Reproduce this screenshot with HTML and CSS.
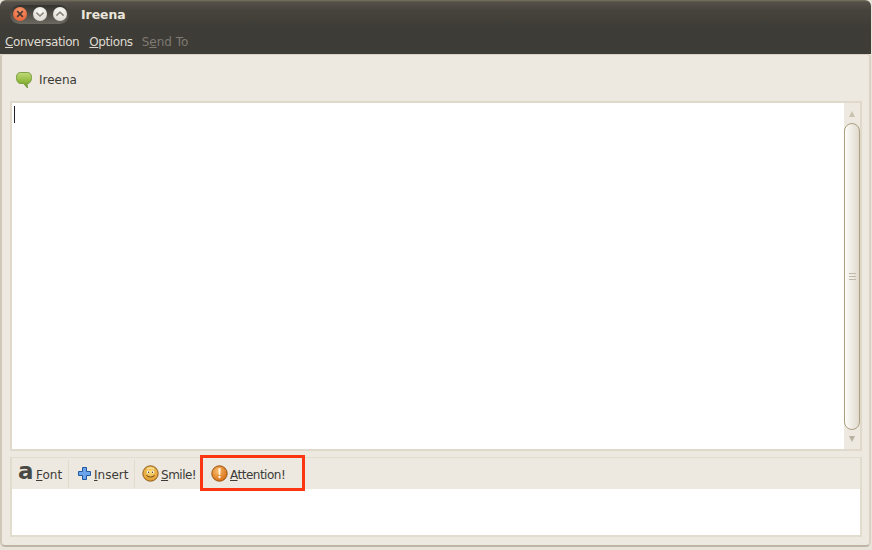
FILE: index.html
```html
<!DOCTYPE html>
<html lang="en">
<head>
<meta charset="utf-8">
<title>Ireena</title>
<link rel="stylesheet" href="styles.css">
</head>
<body>
<div class="window">
  <header class="titlebar">
    <div class="controls">
      <span class="wbtn close">
        <svg width="12" height="12" viewBox="0 0 12 12"><path d="M3.2 3.2l5.6 5.6M8.8 3.2l-5.6 5.6" stroke="#4f3a30" stroke-width="1.8" fill="none"/></svg>
      </span>
      <span class="wbtn">
        <svg width="12" height="12" viewBox="0 0 12 12"><path d="M2.4 4.6L6 8l3.6-3.4" stroke="#8a867c" stroke-width="1.6" fill="none"/></svg>
      </span>
      <span class="wbtn">
        <svg width="12" height="12" viewBox="0 0 12 12"><path d="M2.4 7.6L6 4.2l3.6 3.4" stroke="#8a867c" stroke-width="1.6" fill="none"/></svg>
      </span>
    </div>
    <span class="title">Ireena</span>
  </header>
  <nav class="menubar">
    <span class="menu"><u>C</u>onversation</span>
    <span class="menu"><u>O</u>ptions</span>
    <span class="menu off">S<u>e</u>nd To</span>
  </nav>
  <main class="content">
    <div class="buddy">
      <svg class="buddy-icon" width="18" height="18" viewBox="0 0 18 18">
        <defs><linearGradient id="g" x1="0" y1="0" x2="0" y2="1"><stop offset="0" stop-color="#c2da7c"/><stop offset=".55" stop-color="#93ba3e"/><stop offset="1" stop-color="#6c9622"/></linearGradient></defs>
        <path d="M5.5 1.5h7C15 1.500 16.500 3 16.500 6.500S15 12.500 12.500 12.500h-.5l.5 4.500-4-4.500h-3C3 12.500 1.500 10 1.500 6.500S3 1.500 5.500 1.500z" fill="url(#g)" stroke="#67902a" stroke-width=".8"/>
      </svg>
      <span>Ireena</span>
    </div>
    <div class="history">
      <div class="log"><span class="caret"></span></div>
      <div class="scrollbar">
        <span class="arrow up"></span>
        <div class="thumb"><span class="grip"></span></div>
        <span class="arrow down"></span>
      </div>
    </div>
    <div class="compose">
      <div class="toolbar">
        <div class="tool tool-font"><span class="font-glyph" aria-hidden="true">a</span><span class="label"><u>F</u>ont</span></div>
        <div class="tool tool-insert">
          <svg width="13" height="13" viewBox="0 0 13 13"><path d="M4.500.5h4v4h4v4h-4v4h-4v-4h-4v-4h4z" fill="#6ba4ea" stroke="#20589f" stroke-width="1"/></svg>
          <span class="label"><u>I</u>nsert</span>
        </div>
        <div class="tool tool-smile">
          <svg width="17" height="17" viewBox="0 0 17 17">
            <defs><radialGradient id="s" cx=".5" cy=".4" r=".6"><stop offset="0" stop-color="#fbdc70"/><stop offset="1" stop-color="#e0952c"/></radialGradient></defs>
            <circle cx="8.500" cy="8.500" r="7.700" fill="url(#s)" stroke="#8f6020"/>
            <path d="M5 3.800c2-1.200 5-1.200 7 0" stroke="#fff2c0" fill="none"/>
            <ellipse cx="6.200" cy="7" rx="1.300" ry="1.600" fill="#fff"/><ellipse cx="10.800" cy="7" rx="1.300" ry="1.600" fill="#fff"/>
            <circle cx="6.500" cy="7.300" r=".7" fill="#4a3010"/><circle cx="10.500" cy="7.300" r=".7" fill="#4a3010"/>
            <path d="M4.500 10.200c1 2.400 7 2.400 8 0" stroke="#6a4414" fill="none"/>
          </svg>
          <span class="label tight"><u>S</u>mile!</span>
        </div>
        <div class="tool tool-attention">
          <svg width="17" height="17" viewBox="0 0 17 17">
            <defs><radialGradient id="a" cx=".4" cy=".35" r=".7"><stop offset="0" stop-color="#f9bd6c"/><stop offset="1" stop-color="#d46a10"/></radialGradient></defs>
            <circle cx="8.500" cy="8.500" r="7.700" fill="url(#a)" stroke="#9a5410"/>
            <path d="M7.300 3.200h2.400l-.5 6.800H7.800z" fill="#fff4e6"/><rect x="7.500" y="11" width="2" height="2.200" fill="#fff4e6"/>
          </svg>
          <span class="label tight"><u>A</u>ttention!</span>
        </div>
      </div>
      <div class="input"></div>
    </div>
  </main>
  <div class="highlight"></div>
</div>
</body>
</html>
```
FILE: styles.css
```css
* { box-sizing: border-box; }
html, body { margin: 0; padding: 0; }
body { background: #fff; font-family: "DejaVu Sans", sans-serif; font-size: 12px; color: #3c3b37; }
.window { position: relative; width: 872px; height: 550px; display: flex; flex-direction: column; overflow: hidden; background: #e9e4da; }
.titlebar {
  height: 28px; flex: none; display: flex; align-items: center; padding: 0 1px 0 10px; margin-right: 1px;
  background: linear-gradient(#7a7360 0, #55514a 2px, #47443d 10px, #3e3c36 28px);
  border-radius: 6px 6px 0 0;
}
.controls {
  width: 59px; height: 19px; display: flex; align-items: center; justify-content: space-between; padding: 0 2px 0 3px;
  border-radius: 10px; background: linear-gradient(#34322e, #6c6960);
}
.wbtn {
  width: 14px; height: 14px; border-radius: 50%; display: flex; align-items: center; justify-content: center;
  background: radial-gradient(circle at 50% 30%, #fbfaf7, #d6d2c8);
}
.close { background: radial-gradient(circle at 50% 30%, #f89a70, #e0562a); }
.title { margin-left: 12px; font-weight: bold; font-size: 12.400px; color: #ebe6db; }
.menubar {
  height: 26px; flex: none; display: flex; align-items: center; gap: 10px; padding: 2px 0 0 5px; margin-right: 1px;
  background: #3e3c36; color: #dfdbd2; font-size: 12px;
}
.menu { letter-spacing: -.42px; }
.menu.off { color: #7d7a72; letter-spacing: 0; margin-left: -1px; }
.content {
  flex: 1; display: flex; flex-direction: column; background: #ede9e1; border: 1px solid #d8d1c4; border-bottom: 2px solid #bdb5a5;
  border-left: 2px solid #cfc8b8; border-right: 2px solid #d8d1c4;
  border-radius: 3px 3px 5px 5px; padding: 0 7px 0 8px; margin: 0 1px 3px 0;
}
.buddy { height: 46px; flex: none; display: flex; align-items: center; gap: 6px; padding-left: 5px; padding-top: 3px; }
.buddy-icon { flex: none; }
.history { height: 350px; flex: none; display: flex; border: 2px solid #e0d9cb; background: #ede9e1; }
.log { flex: 1; background: #fff; padding: 3px 0 0 2px; }
.caret { display: block; width: 1px; height: 17px; background: #222; }
.scrollbar { width: 16px; flex: none; display: flex; flex-direction: column; align-items: center; }
.arrow { width: 0; height: 0; border-left: 3.500px solid transparent; border-right: 3.500px solid transparent; flex: none; }
.up { border-bottom: 6px solid #c9c2b0; margin: 8px 0 6px; }
.down { border-top: 6px solid #b8b1a0; margin: 6px 0 7px; }
.thumb {
  width: 16px; flex: 1; border: 1px solid #ab9f80; border-radius: 8px; display: flex; align-items: center; justify-content: center;
  background: linear-gradient(90deg, #fdfcf9, #e0d9cd);
}
.grip { width: 7px; height: 7px; background: repeating-linear-gradient(#c0b9a8 0, #c0b9a8 1px, transparent 1px, transparent 3px); }
.compose { margin-top: 6px; height: 80px; flex: none; border: 2px solid #e2dccf; border-top-width: 1px; display: flex; flex-direction: column; }
.toolbar { height: 31px; flex: none; display: flex; align-items: center; background: #ede9e1; font-size: 12px; padding-top: 1px; }
.tool { height: 28px; display: flex; align-items: center; flex: none; border-right: 1px solid #e2dccf; }
.tool svg { margin-top: -1px; }
.label { margin-top: 1px; }
.tool-font { width: 57px; padding-left: 6px; gap: 2px; }
.font-glyph { font: bold 23px/20px "DejaVu Sans", sans-serif; color: #484945; margin-top: -7px; width: 16px; }
.tool-insert { width: 66px; padding-left: 9px; gap: 3px; }
.tool-smile { width: 66px; padding-left: 7px; gap: 2px; }
.tool-attention { padding-left: 10px; gap: 2px; border: 0; }
.tight { letter-spacing: -.5px; }
.input { flex: 1; background: #fff; }
.highlight { position: absolute; left: 200px; top: 455px; width: 105px; height: 36px; border: 3px solid #fb3412; }
```
